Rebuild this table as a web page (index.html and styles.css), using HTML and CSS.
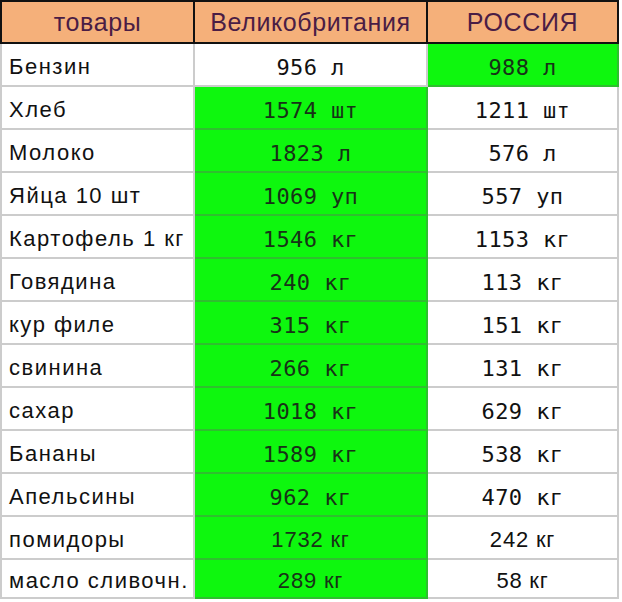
FILE: index.html
```html
<!DOCTYPE html>
<html lang="ru">
<head>
<meta charset="utf-8">
<title>Цены</title>
<link rel="stylesheet" href="styles.css">
</head>
<body>
<table class="grid">
  <colgroup>
    <col class="c1"><col class="c2"><col class="c3">
  </colgroup>
  <thead>
    <tr><th>товары</th><th>Великобритания</th><th>РОССИЯ</th></tr>
  </thead>
  <tbody>
    <tr><td class="name">Бензин</td><td class="num">956 л</td><td class="num hi">988 л</td></tr>
    <tr><td class="name">Хлеб</td><td class="num hi">1574 шт</td><td class="num">1211 шт</td></tr>
    <tr><td class="name">Молоко</td><td class="num hi">1823 л</td><td class="num">576 л</td></tr>
    <tr><td class="name">Яйца 10 шт</td><td class="num hi">1069 уп</td><td class="num">557 уп</td></tr>
    <tr><td class="name">Картофель 1 кг</td><td class="num hi">1546 кг</td><td class="num">1153 кг</td></tr>
    <tr><td class="name">Говядина</td><td class="num hi">240 кг</td><td class="num">113 кг</td></tr>
    <tr><td class="name">кур филе</td><td class="num hi">315 кг</td><td class="num">151 кг</td></tr>
    <tr><td class="name">свинина</td><td class="num hi">266 кг</td><td class="num">131 кг</td></tr>
    <tr><td class="name">сахар</td><td class="num hi">1018 кг</td><td class="num">629 кг</td></tr>
    <tr><td class="name">Бананы</td><td class="num hi">1589 кг</td><td class="num">538 кг</td></tr>
    <tr><td class="name">Апельсины</td><td class="num hi">962 кг</td><td class="num">470 кг</td></tr>
    <tr><td class="name">помидоры</td><td class="sans hi">1732 кг</td><td class="sans">242 кг</td></tr>
    <tr class="last"><td class="name">масло сливочн.</td><td class="sans hi">289 кг</td><td class="sans">58 кг</td></tr>
  </tbody>
</table>
</body>
</html>
```

FILE: styles.css
```css
html, body {
  margin: 0;
  padding: 0;
  background: #ffffff;
}

.grid {
  border-collapse: collapse;
  table-layout: fixed;
  width: 617px;
  margin: 0;
}

.c1 { width: 193px; }
.c2 { width: 233px; }
.c3 { width: 191px; }

.grid th {
  height: 40px;
  padding: 0;
  background: #f5b07a;
  color: #4a1d45;
  font-family: "Liberation Sans", Arial, sans-serif;
  font-weight: normal;
  font-size: 25px;
  letter-spacing: 0.6px;
  text-align: center;
  border: 2px solid #111111;
}

.grid td {
  height: 36px;
  padding: 5px 0 0 0;
  border: 2px solid #cccccc;
  color: #111111;
  white-space: pre;
}

.grid tbody tr:first-child td {
  border-top: 2px solid #111111;
}

.grid td.name {
  font-family: "Liberation Sans", Arial, sans-serif;
  font-size: 22px;
  letter-spacing: 1.5px;
  padding-left: 7px;
  text-align: left;
}

.num {
  font-family: "DejaVu Sans Mono", "Liberation Mono", monospace;
  font-size: 22px;
  letter-spacing: 0.4px;
  text-align: center;
}

.sans {
  font-family: "Liberation Sans", Arial, sans-serif;
  font-size: 22px;
  letter-spacing: 0.8px;
  text-align: center;
}

.grid td.hi {
  background: #0ef70e;
  color: #173217;
  border-color: #2fbf2f;
}

.grid .last td {
  height: 32px;
}
```
